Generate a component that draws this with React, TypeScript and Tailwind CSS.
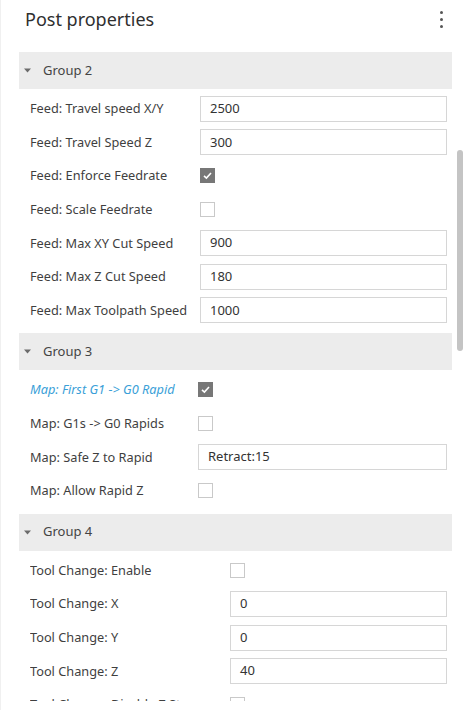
import React from "react";

type Prop =
  | { label: string; kind: "text"; value: string; highlight?: boolean }
  | { label: string; kind: "check"; checked: boolean; highlight?: boolean };

interface Group {
  name: string;
  labelWidth: string;
  props: Prop[];
}

const groups: Group[] = [
  {
    name: "Group 2",
    labelWidth: "w-[170px]",
    props: [
      { label: "Feed: Travel speed X/Y", kind: "text", value: "2500" },
      { label: "Feed: Travel Speed Z", kind: "text", value: "300" },
      { label: "Feed: Enforce Feedrate", kind: "check", checked: true },
      { label: "Feed: Scale Feedrate", kind: "check", checked: false },
      { label: "Feed: Max XY Cut Speed", kind: "text", value: "900" },
      { label: "Feed: Max Z Cut Speed", kind: "text", value: "180" },
      { label: "Feed: Max Toolpath Speed", kind: "text", value: "1000" },
    ],
  },
  {
    name: "Group 3",
    labelWidth: "w-[168px]",
    props: [
      { label: "Map: First G1 -> G0 Rapid", kind: "check", checked: true, highlight: true },
      { label: "Map: G1s -> G0 Rapids", kind: "check", checked: false },
      { label: "Map: Safe Z to Rapid", kind: "text", value: "Retract:15" },
      { label: "Map: Allow Rapid Z", kind: "check", checked: false },
    ],
  },
  {
    name: "Group 4",
    labelWidth: "w-[200px]",
    props: [
      { label: "Tool Change: Enable", kind: "check", checked: false },
      { label: "Tool Change: X", kind: "text", value: "0" },
      { label: "Tool Change: Y", kind: "text", value: "0" },
      { label: "Tool Change: Z", kind: "text", value: "40" },
      { label: "Tool Change: Disable Z Stepper", kind: "check", checked: false },
    ],
  },
];

const CheckBox = ({ checked }: { checked: boolean }) =>
  checked ? (
    <div className="w-[15px] h-[15px] bg-[#777777] flex items-center justify-center">
      <svg width="11" height="11" viewBox="0 0 11 11">
        <path d="M2 5.8 L4.4 8 L9 3" fill="none" stroke="#ffffff" strokeWidth="1.6" />
      </svg>
    </div>
  ) : (
    <div className="w-[15px] h-[15px] bg-white border border-[#c9c9c9]" />
  );

const Row = ({ prop, labelWidth }: { prop: Prop; labelWidth: string }) => (
  <div className="h-[33.6px] flex items-center pl-[11px] pr-[5px]">
    <div
      className={`${labelWidth} shrink-0 whitespace-nowrap overflow-hidden text-[12.75px] ${
        prop.highlight ? "italic text-[#3a9fd8]" : "text-[#3f3f3f]"
      }`}
    >
      {prop.label}
    </div>
    {prop.kind === "text" ? (
      <div className="flex-1 h-[26px] border border-[#d6d6d6] flex items-center px-[9px] text-[13px] text-[#333333]">
        {prop.value}
      </div>
    ) : (
      <CheckBox checked={prop.checked} />
    )}
  </div>
);

const GroupSection = ({ group }: { group: Group }) => (
  <div>
    <div className="h-[37px] bg-[#ececec] flex items-center pl-[5px] gap-[12px]">
      <svg width="7" height="5" viewBox="0 0 7 5">
        <path d="M0 0.5 H7 L3.5 4.5 Z" fill="#6b6b6b" />
      </svg>
      <span className="text-[13px] text-[#444444]">{group.name}</span>
    </div>
    <div className="pt-[3px] pb-[6px]">
      {group.props.map((p) => (
        <Row key={p.label} prop={p} labelWidth={group.labelWidth} />
      ))}
    </div>
  </div>
);

export default function App() {
  return (
    <div className="w-[474px] h-[710px] bg-white overflow-hidden border-l border-[#f0f0f0] font-['Noto_Sans',sans-serif]">
      <div className="h-[38px] flex items-center justify-between pl-[24px] pr-[31px]">
        <h1 className="text-[18px] text-[#2f2f2f]">Post properties</h1>
        <div className="flex flex-col gap-[4px]">
          <span className="w-[3px] h-[3px] rounded-full bg-[#555555]" />
          <span className="w-[3px] h-[3px] rounded-full bg-[#555555]" />
          <span className="w-[3px] h-[3px] rounded-full bg-[#555555]" />
        </div>
      </div>
      <div className="relative h-[663px] overflow-hidden pt-[14px] pl-[18px] pr-[22px]">
        {groups.map((g) => (
          <GroupSection key={g.name} group={g} />
        ))}
        <div className="absolute left-[456px] top-[112px] w-[6px] h-[201px] rounded-full bg-[#c4c4c4]" />
      </div>
    </div>
  );
}
